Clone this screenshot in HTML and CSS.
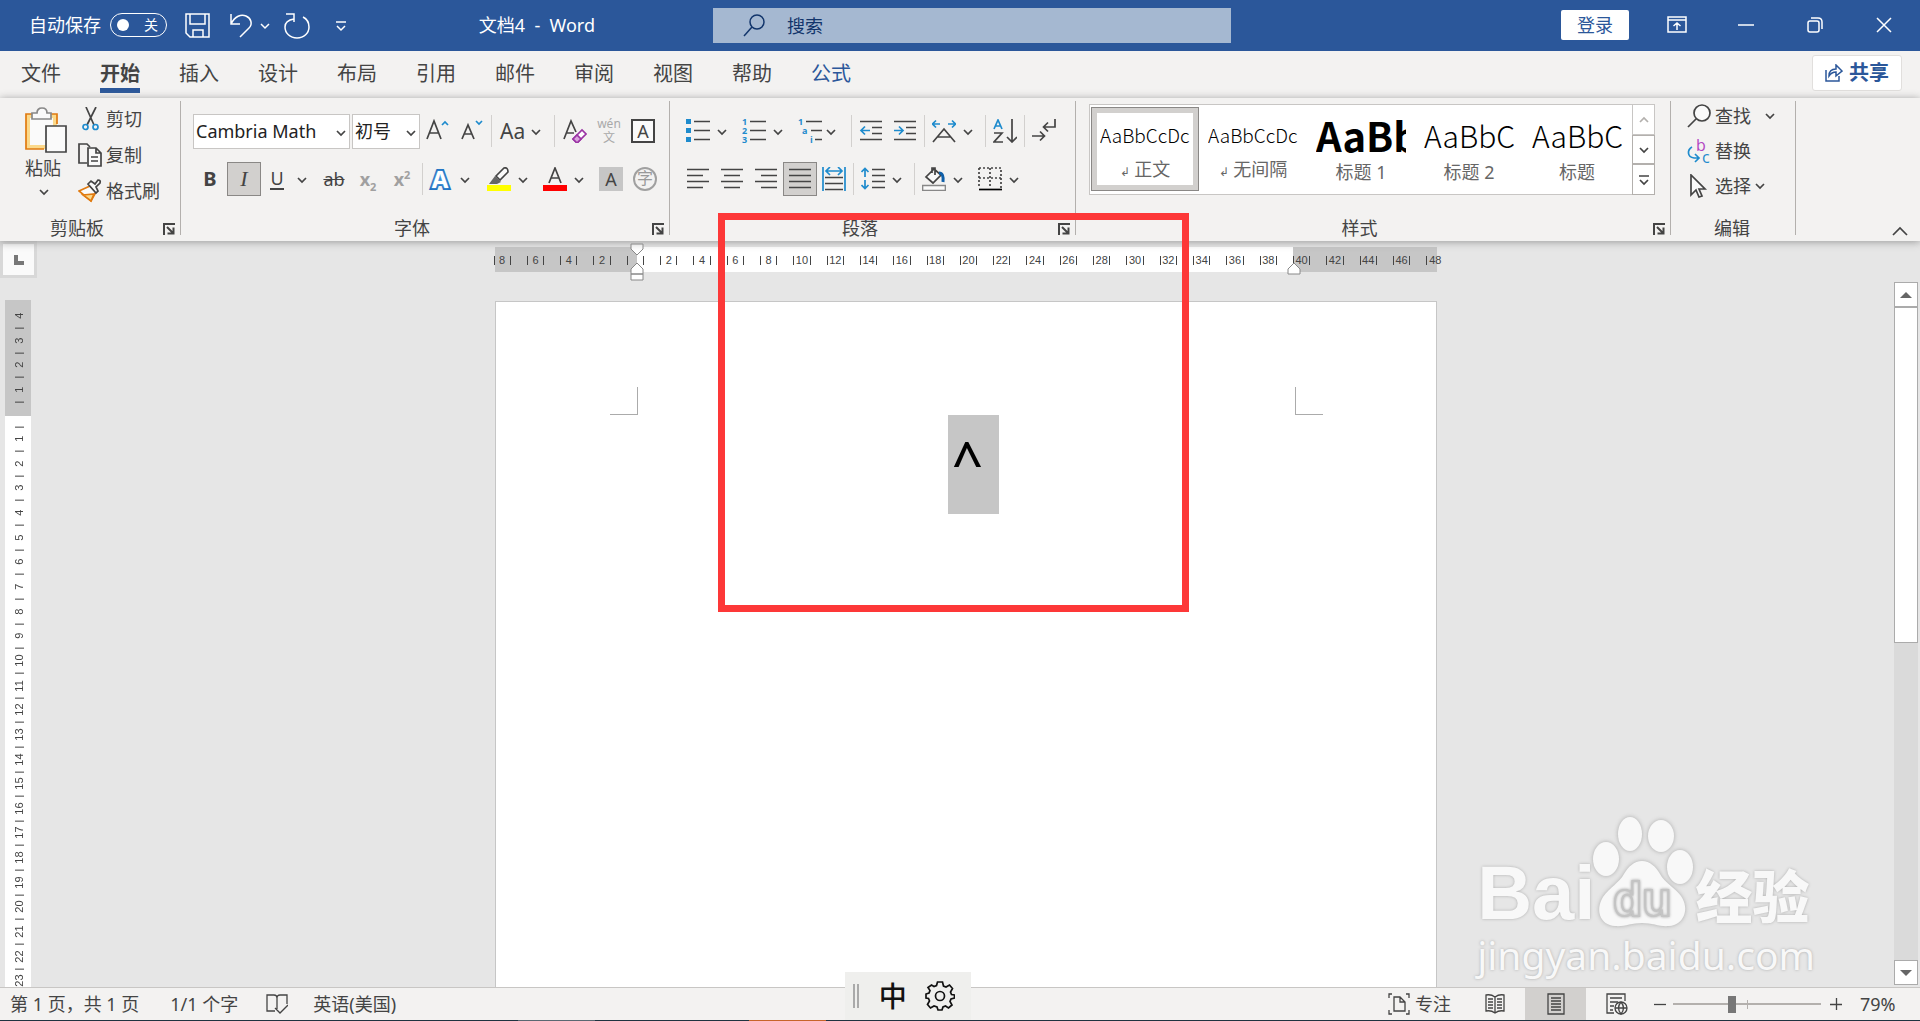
FILE: index.html
```html
<!DOCTYPE html>
<html lang="zh-CN">
<head>
<meta charset="utf-8">
<title>文档4 - Word</title>
<link rel="stylesheet" href="styles.css">
</head>
<body>
<svg class="defs" aria-hidden="true">
  <symbol id="chev" viewBox="0 0 10 10"><path d="M1 3l4 4 4-4"/></symbol>
  <symbol id="launch" viewBox="0 0 12 12"><path d="M1 12V1h11M4 4l6 6M10.500 4.500v6h-6" /></symbol>
</svg>
<div class="app">
  <header class="titlebar">
    <div class="title-left">
      <label class="autosave"><span>自动保存</span><span class="switch"><input type="checkbox"><span>关</span></span></label>
      <button class="qat save" aria-label="保存"><svg width="26" height="26" viewBox="0 0 26 26"><path d="M1 1h23v23H5l-4-4zM5 1v10h15V1M8 24v-7h10v7"/></svg></button>
      <button class="qat undo" aria-label="撤消"><svg width="24" height="26" viewBox="0 0 24 26"><path d="M2 1v10h9M2 11C6 3 12 1 17 3c5 2 7 8 3 12l-9 9"/></svg></button>
      <button class="qat drop" aria-label="撤消选项"><svg width="10" height="10"><use href="#chev"/></svg></button>
      <button class="qat redo" aria-label="重复"><svg width="26" height="26" viewBox="0 0 26 26"><path d="M2 1h8v8M10 1v5C3 7 1 11 1 14c0 6 5 11 12 11s12-5 12-11c0-4-2-8-6-10"/></svg></button>
      <button class="qat" aria-label="自定义快速访问工具栏"><svg width="12" height="12" viewBox="0 0 12 12"><path d="M1 2h10M2 6l4 4 4-4"/></svg></button>
      <h1 class="doc-title">文档4&nbsp; -&nbsp; Word</h1>
    </div>
    <label class="search"><svg width="22" height="24" viewBox="0 0 22 24"><circle cx="14" cy="8" r="7"/><path d="M9 13L1 22"/></svg><input type="text" placeholder="搜索" aria-label="搜索"></label>
    <div class="title-right">
      <button class="login">登录</button>
      <button class="win" aria-label="功能区显示选项"><svg width="20" height="17" viewBox="0 0 20 17"><path d="M1 1h18v15H1zM1 4h18M10 14V7M6.500 10L10 7l3.500 3"/></svg></button>
      <button class="win" aria-label="最小化"><svg width="16" height="16" viewBox="0 0 16 16"><path d="M0 8h16"/></svg></button>
      <button class="win" aria-label="还原"><svg width="16" height="16" viewBox="0 0 16 16"><rect x="1" y="4" width="11" height="11" rx="2"/><path d="M4 1h7q4 0 4 4v7"/></svg></button>
      <button class="win" aria-label="关闭"><svg width="16" height="16" viewBox="0 0 16 16"><path d="M1 1l14 14M15 1L1 15"/></svg></button>
    </div>
  </header>

  <nav class="tabs">
    <a href="#">文件</a><a href="#" class="active">开始</a><a href="#">插入</a><a href="#">设计</a><a href="#">布局</a><a href="#">引用</a><a href="#">邮件</a><a href="#">审阅</a><a href="#">视图</a><a href="#">帮助</a><a href="#" class="context">公式</a>
    <button class="share"><svg width="18" height="18" viewBox="0 0 18 18"><path d="M1 6v11h13v-5M4 12c0-5 3-7 7-7V1l6 6-6 5V8c-3 0-5 1-7 4z"/></svg>共享</button>
  </nav>

  <div class="ribbon">
    <section class="group g-clip">
      <div class="clip-body">
        <button class="paste">
          <svg width="42" height="46" viewBox="0 0 42 46"><path class="fy" d="M1 7h31v35H1z"/><path class="fw" d="M5 11h23v27H5z" stroke="none"/><path class="orange" d="M32 17V7H1v35h18"/><path class="fw gray" d="M7 12V6h5c0-3 2-5 5-5s5 2 5 5h4v6z"/><path class="fw" d="M21 19h20v26H21z"/></svg>
          <span>粘贴</span>
          <svg width="10" height="10"><use href="#chev"/></svg>
        </button>
        <div class="clip-list">
          <button><svg width="24" height="24" viewBox="0 0 24 24"><path d="M8 0l8 18M18 0L9 18"/><circle class="blue" cx="7.500" cy="20" r="2.500"/><circle class="blue" cx="17.500" cy="20" r="2.500"/></svg>剪切</button>
          <button><svg width="24" height="24" viewBox="0 0 24 24"><path d="M9 20H1V1h8l3 3"/><path class="fw" d="M10 5h8l5 5v13H10zM18 5v5h5M13 14h7M13 18h7"/></svg>复制</button>
          <button><svg width="24" height="24" viewBox="0 0 24 24"><path class="fw orange" d="M1 12l11-5 6 6-5 9z"/><path class="fy orange" d="M5 16l11-1-3 7z"/><path class="fw" d="M10 5l3-3 4 3 3-4q3 0 2 3l-4 4 2 4-2 2z"/></svg>格式刷</button>
        </div>
      </div>
      <footer><span>剪贴板</span><button class="launcher" aria-label="剪贴板选项"><svg width="12" height="12"><use href="#launch"/></svg></button></footer>
    </section>

    <section class="group g-font">
      <div class="rows">
        <div class="row">
          <span class="combo name"><select aria-label="字体"><option>Cambria Math</option></select><svg width="10" height="10"><use href="#chev"/></svg></span>
          <span class="combo size"><select aria-label="字号"><option>初号</option></select><svg width="10" height="10"><use href="#chev"/></svg></span>
          <button class="ib" aria-label="增大字号"><svg width="24" height="24" viewBox="0 0 24 24"><path d="M2 20L9 2l7 18M4 14h10"/><path class="blue" d="M17 6l3-3 3 3"/></svg></button>
          <button class="ib" aria-label="减小字号"><svg width="24" height="24" viewBox="0 0 24 24"><path d="M3 20L9 6l6 14M5 15h8"/><path class="blue" d="M17 2l3 3 3-3"/></svg></button>
          <i class="sep"></i>
          <button class="ib split" aria-label="更改大小写"><span class="aa">Aa</span><svg width="10" height="10"><use href="#chev"/></svg></button>
          <i class="sep"></i>
          <button class="ib" aria-label="清除格式"><svg width="24" height="24" viewBox="0 0 24 24"><path d="M1 20L8 2l5 11M4 14h7"/><path class="purple" d="M10 20l9-9 4 4-9 9z"/><path class="purplefill" d="M10 20l4-4 4 4-4 4z"/></svg></button>
          <button class="ib wen" aria-label="拼音指南"><span>wén</span><span>文</span></button>
          <button class="ib" aria-label="字符边框"><span class="boxed">A</span></button>
        </div>
        <div class="row">
          <button class="ib bold">B</button>
          <button class="ib ital on">I</button>
          <button class="ib split" aria-label="下划线"><span class="under">U</span><svg width="10" height="10"><use href="#chev"/></svg></button>
          <button class="ib strike">ab</button>
          <button class="ib dim"><span>x<sub>2</sub></span></button>
          <button class="ib dim"><span>x<sup>2</sup></span></button>
          <i class="sep"></i>
          <button class="ib split" aria-label="文本效果"><span class="effect">A</span><svg width="10" height="10"><use href="#chev"/></svg></button>
          <button class="ib split" aria-label="突出显示"><svg width="24" height="24" viewBox="0 0 24 24"><path class="yellow" d="M0 18h24v6H0z"/><path class="fw" d="M9 9l8-8q4-1 4 4l-8 8z"/><path class="dark" d="M8 9l6 6-4 2H2z"/></svg><svg width="10" height="10"><use href="#chev"/></svg></button>
          <button class="ib split" aria-label="字体颜色"><svg width="24" height="24" viewBox="0 0 24 24"><path class="red" d="M0 18h24v6H0z"/><path d="M6 16l6-15 6 15M8 11h8"/></svg><svg width="10" height="10"><use href="#chev"/></svg></button>
          <button class="ib" aria-label="字符底纹"><span class="shaded">A</span></button>
          <button class="ib" aria-label="带圈字符"><span class="circled">字</span></button>
        </div>
      </div>
      <footer><span>字体</span><button class="launcher" aria-label="字体选项"><svg width="12" height="12"><use href="#launch"/></svg></button></footer>
    </section>

    <section class="group g-para">
      <div class="rows">
        <div class="row">
          <button class="ib split" aria-label="项目符号"><svg width="24" height="24" viewBox="0 0 24 24"><path class="bluefill" d="M0 0h5v5H0zM0 9h5v5H0zM0 18h5v5H0z"/><path d="M8 2.500h16M8 11.500h16M8 20.500h16"/></svg><svg width="10" height="10"><use href="#chev"/></svg></button>
          <button class="ib split" aria-label="编号"><svg width="24" height="24" viewBox="0 0 24 24"><text x="0" y="6">1</text><text x="0" y="15">2</text><text x="0" y="24">3</text><path d="M8 2.500h16M8 11.500h16M8 20.500h16"/></svg><svg width="10" height="10"><use href="#chev"/></svg></button>
          <button class="ib split multi" aria-label="多级列表"><svg width="24" height="24" viewBox="0 0 24 24"><text x="0" y="6">1</text><text x="4" y="15">a</text><text x="12" y="24">i</text><path d="M8 2.500h16M13 11.500h11M17 20.500h7"/></svg><svg width="10" height="10"><use href="#chev"/></svg></button>
          <i class="sep"></i>
          <button class="ib" aria-label="减少缩进"><svg width="24" height="24" viewBox="0 0 24 24"><path d="M1 2.500h22M13 8.500h10M13 14.500h10M1 20.500h22"/><path class="blue" d="M11 11.500H2M6 7.500l-4 4 4 4"/></svg></button>
          <button class="ib" aria-label="增加缩进"><svg width="24" height="24" viewBox="0 0 24 24"><path d="M1 2.500h22M13 8.500h10M13 14.500h10M1 20.500h22"/><path class="blue" d="M1 11.500h9M6 7.500l4 4-4 4"/></svg></button>
          <i class="sep"></i>
          <button class="ib split" aria-label="中文版式"><svg width="24" height="24" viewBox="0 0 24 24"><path d="M1 23L12 10l11 13M5 18h14"/><path class="blue" d="M8 5H1M4 1.500L.5 5 4 8.500M16 5h7M20 1.500L23.500 5 20 8.500"/></svg><svg width="10" height="10"><use href="#chev"/></svg></button>
          <i class="sep"></i>
          <button class="ib" aria-label="排序"><svg width="24" height="24" viewBox="0 0 24 24"><path class="blue" d="M1 10L5 1l4 9M2 7h6"/><path d="M1 14h8L1 23h9M19 0v23M14 18l5 5 5-5"/></svg></button>
          <i class="sep"></i>
          <button class="ib" aria-label="显示编辑标记"><svg width="24" height="24" viewBox="0 0 24 24"><path d="M23 0v8H12M16 3.500L11.500 8l4.500 4.500M0 17h12M8 12.500l4.500 4.500L8 21.500"/></svg></button>
        </div>
        <div class="row">
          <button class="ib" aria-label="左对齐"><svg width="24" height="24" viewBox="0 0 24 24"><path d="M1 2.500h22M1 8.500h16M1 14.500h22M1 20.500h16"/></svg></button>
          <button class="ib" aria-label="居中"><svg width="24" height="24" viewBox="0 0 24 24"><path d="M1 2.500h22M4 8.500h16M1 14.500h22M4 20.500h16"/></svg></button>
          <button class="ib" aria-label="右对齐"><svg width="24" height="24" viewBox="0 0 24 24"><path d="M1 2.500h22M7 8.500h16M1 14.500h22M7 20.500h16"/></svg></button>
          <button class="ib on" aria-label="两端对齐"><svg width="24" height="24" viewBox="0 0 24 24"><path d="M1 2.500h22M1 8.500h22M1 14.500h22M1 20.500h22"/></svg></button>
          <button class="ib" aria-label="分散对齐"><svg width="24" height="24" viewBox="0 0 24 24"><path d="M3 10.500h18M3 16.500h18M3 22.500h18"/><path class="blue" d="M1 0v24M23 0v24M4 4h16M8 0L4 4l4 4M16 0l4 4-4 4"/></svg></button>
          <i class="sep"></i>
          <button class="ib split" aria-label="行距"><svg width="24" height="24" viewBox="0 0 24 24"><path d="M11 2.500h13M11 8.500h13M11 14.500h13M11 20.500h13"/><path class="blue" d="M4 1v9M0.500 5L4 1.500 7.500 5M4 13v9M0.500 18L4 21.500 7.500 18"/></svg><svg width="10" height="10"><use href="#chev"/></svg></button>
          <i class="sep"></i>
          <button class="ib split" aria-label="底纹"><svg width="24" height="24" viewBox="0 0 24 24"><path class="fw gray" d="M.5 18.500h23v5H.5z"/><path class="fw" d="M12 2L4 10l7 6 8-8zM10 6V1h3v7"/><path class="navy" d="M17 6q5 0 4 9" /></svg><svg width="10" height="10"><use href="#chev"/></svg></button>
          <button class="ib split" aria-label="边框"><svg width="24" height="24" viewBox="0 0 24 24"><path class="dots" d="M1 1h22v20M1 1v20M12 1v20M1 11h22"/><path class="black" d="M1 22.500h23"/></svg><svg width="10" height="10"><use href="#chev"/></svg></button>
        </div>
      </div>
      <footer><span>段落</span><button class="launcher" aria-label="段落选项"><svg width="12" height="12"><use href="#launch"/></svg></button></footer>
    </section>

    <section class="group g-style">
      <div class="gallery">
        <button class="style on"><span class="pv">AaBbCcDc</span><span class="nm"><small>↲</small> 正文</span></button>
        <button class="style"><span class="pv">AaBbCcDc</span><span class="nm"><small>↲</small> 无间隔</span></button>
        <button class="style"><span class="pv h1">AaBb</span><span class="nm">标题 1</span></button>
        <button class="style"><span class="pv h2">AaBbC</span><span class="nm">标题 2</span></button>
        <button class="style"><span class="pv h2">AaBbC</span><span class="nm">标题</span></button>
        <div class="spin">
          <button disabled aria-label="上一行"><svg class="flip" width="10" height="10"><use href="#chev"/></svg></button>
          <button aria-label="下一行"><svg width="10" height="10"><use href="#chev"/></svg></button>
          <button aria-label="其他"><svg width="12" height="12" viewBox="0 0 12 12"><path d="M1 2h10M2 6l4 4 4-4"/></svg></button>
        </div>
      </div>
      <footer><span>样式</span><button class="launcher" aria-label="样式选项"><svg width="12" height="12"><use href="#launch"/></svg></button></footer>
    </section>

    <section class="group g-edit">
      <div class="edit-list">
        <button><svg width="24" height="24" viewBox="0 0 24 24"><circle class="fw" cx="15" cy="9" r="8"/><path d="M9 15l-8 8"/></svg>查找<svg class="far" width="10" height="10"><use href="#chev"/></svg></button>
        <button><svg width="24" height="24" viewBox="0 0 24 24"><text class="rp" x="9" y="12">b</text><text class="rb" x="15" y="24">c</text><path class="blue" d="M5 8c-5 3-5 10 2 11h5M8 15l4 4-4 4"/></svg>替换</button>
        <button><svg width="24" height="24" viewBox="0 0 24 24"><path class="fw" d="M4 1v20l5-5 3 7 3-1-3-7h6z"/></svg>选择<svg width="10" height="10"><use href="#chev"/></svg></button>
      </div>
      <footer><span>编辑</span></footer>
    </section>
    <button class="collapse" aria-label="折叠功能区"><svg width="16" height="10" viewBox="0 0 16 10"><path d="M1 9l7-7 7 7"/></svg></button>
  </div>

  <main class="workspace">
    <div class="side">
      <button class="tabsel" aria-label="制表符"><svg width="10" height="10" viewBox="0 0 10 10"><path d="M2 0v8h8"/></svg></button>
      <div class="vruler"><div class="vmargin"></div><div class="vcells">
        <span>4</span><span>3</span><span>2</span><span>1</span><span></span><span>1</span><span>2</span><span>3</span><span>4</span><span>5</span><span>6</span><span>7</span><span>8</span><span>9</span><span>10</span><span>11</span><span>12</span><span>13</span><span>14</span><span>15</span><span>16</span><span>17</span><span>18</span><span>19</span><span>20</span><span>21</span><span>22</span><span>23</span>
      </div></div>
    </div>
    <div class="canvas">
      <div class="hruler">
        <div class="hcells"><span>8</span><span>6</span><span>4</span><span>2</span><span></span><span>2</span><span>4</span><span>6</span><span>8</span><span>10</span><span>12</span><span>14</span><span>16</span><span>18</span><span>20</span><span>22</span><span>24</span><span>26</span><span>28</span><span>30</span><span>32</span><span>34</span><span>36</span><span>38</span><span>40</span><span>42</span><span>44</span><span>46</span><span>48</span></div>
        <svg class="marker first" width="14" height="38" viewBox="0 0 14 38"><path d="M1 1h12v5l-6 6-6-6zM1 31v-5l6-6 6 6v5zM1 31h12v6H1z"/></svg>
        <svg class="marker right" width="14" height="13" viewBox="0 0 14 13"><path d="M1 12V7l6-6 6 6v5z"/></svg>
      </div>
      <article class="page">
        <div class="marks"><i class="crop l"></i><i class="crop r"></i></div>
        <p class="text"><span class="sel">^</span></p>
      </article>
    </div>
    <div class="vscroll">
      <button aria-label="向上滚动"><svg width="12" height="6" viewBox="0 0 12 6"><path d="M6 0l6 6H0z"/></svg></button>
      <div class="track"><div class="thumb"></div></div>
      <button aria-label="向下滚动"><svg width="12" height="6" viewBox="0 0 12 6"><path d="M0 0h12L6 6z"/></svg></button>
    </div>
    <div class="watermark" aria-hidden="true">
      <div class="wm-top"><span class="wm-bai">Bai</span>
        <svg width="96" height="112" viewBox="0 0 96 112"><ellipse cx="14" cy="44" rx="13" ry="17"/><ellipse cx="38" cy="19" rx="12" ry="17"/><ellipse cx="69" cy="21" rx="13" ry="16"/><ellipse cx="88" cy="52" rx="13" ry="17"/><path d="M50 46c8 0 14 6 18 13 5 9 14 13 21 22 9 13 3 29-12 30-9 1-16-3-27-3s-18 4-27 3C8 110 3 95 11 82c7-10 16-14 21-23 4-7 10-13 18-13z"/><text x="21" y="101">du</text></svg>
        <span class="wm-cn">经验</span></div>
      <div class="wm-url">jingyan.baidu.com</div>
    </div>
  </main>

  <footer class="status">
    <span>第 1 页，共 1 页</span><span class="words">1/1 个字</span>
    <button class="proof" aria-label="校对"><svg width="22" height="20" viewBox="0 0 22 20"><path d="M9 17H1V1h7q3 0 3 3 0-3 3-3h7v9M11 4v11M9 14l5 5 8-8"/></svg></button>
    <span>英语(美国)</span>
    <button class="focus"><svg width="22" height="22" viewBox="0 0 22 22"><path d="M4 1H1v4M18 1h3v4M4 21H1v-4M18 21h3v-4M6 4h6l5 5v9H6zM12 4v5h5"/></svg>专注</button>
    <button class="view" aria-label="阅读视图"><svg width="20" height="20" viewBox="0 0 20 20"><path d="M10 3Q6 0 1 1v16q5-1 9 2 4-3 9-2V1q-5-1-9 2v16M3 5h5M3 8h5M3 11h5M3 14h5M12 5h5M12 8h5M12 11h5M12 14h5"/></svg></button>
    <button class="view on" aria-label="页面视图"><svg width="20" height="22" viewBox="0 0 20 22"><path d="M2 1h16v20H2zM5 5h10M5 8h10M5 11h10M5 14h10M5 17h10"/></svg></button>
    <button class="view" aria-label="Web 版式视图"><svg width="22" height="22" viewBox="0 0 22 22"><path d="M8 20H1V1h18v7M4 5h12M4 9h8M4 13h4M4 17h3"/><circle cx="15" cy="15" r="6"/><path d="M9 15h12M15 9q-5 6 0 12q5-6 0-12"/></svg></button>
    <button class="zb out" aria-label="缩小"><svg width="12" height="12" viewBox="0 0 12 12"><path d="M0 6.500h12"/></svg></button>
    <input class="zoom" type="range" min="0" max="100" value="39" aria-label="显示比例">
    <button class="zb" aria-label="放大"><svg width="12" height="12" viewBox="0 0 12 12"><path d="M0 6.500h12M6.500 0v12"/></svg></button>
    <span class="pct">79%</span>
  </footer>
  <div class="taskline"></div>
  <div class="ime"><i></i><button class="cn">中</button><button aria-label="设置"><svg width="30" height="30" viewBox="0 0 30 30"><path d="M12.500 1h5l1 4 2.500 1 3.500-2 3 3.500L25.500 11l1 2.500 3 .5v3l-3.500 1-1 2.500 2 3.500-3.500 3-3-2-2.500 1-1 3h-4l-1-3-3-1-3.500 2-3-3.500L4.500 20l-1-2.500L1 17v-4l3-1 1-2.500L3 6.500 6.500 4 9 5.500l2.500-1z"/><circle cx="15" cy="15" r="4.500"/></svg></button></div>
  <div class="highlight-box"></div>
</div>
</body>
</html>
```

FILE: styles.css
```css
* { box-sizing: border-box; }

body {
  margin: 0;
  color: #444;
  font: 18px/24px "Noto Sans", "Noto Sans CJK SC", sans-serif;
}

button, input, select {
  font: inherit;
  color: inherit;
}

button {
  display: flex;
  align-items: center;
  justify-content: center;
  padding: 0;
  border: 0;
  background: none;
  white-space: nowrap;
}

svg {
  display: block;
  flex: none;
  fill: none;
  stroke: #444;
  stroke-width: 1.7;
}

i { display: block; }
.defs { position: absolute; width: 0; height: 0; }

.app {
  position: relative;
  display: flex;
  flex-direction: column;
  height: 100vh;
  overflow: hidden;
  background: #e6e6e6;
}

/* Title bar */
.titlebar {
  display: grid;
  grid-template-columns: 713fr 518fr 689fr;
  align-items: center;
  flex: none;
  height: 51px;
  background: #2b579a;
  color: #fff;
}
.titlebar svg { stroke: #fff; stroke-width: 1.5; }
.title-left, .title-right { display: flex; align-items: center; }
.title-left { padding: 0 0 2px 29px; }
.autosave, .switch { display: flex; align-items: center; }
.autosave { gap: 9px; }
.switch {
  justify-content: space-between;
  width: 57px;
  height: 24px;
  padding: 0 8px 0 6px;
  border: 1px solid #fff;
  border-radius: 12px;
  font-size: 14px;
}
.switch input {
  appearance: none;
  width: 12px;
  height: 12px;
  margin: 0;
  border-radius: 50%;
  background: #fff;
}
.qat { padding-top: 2px; }
.save { margin-left: 18px; }
.undo { margin-left: 18px; }
.drop { margin-left: 7px; }
.redo { margin: 0 25px 0 14px; }
.doc-title {
  margin: 0 118px 0 auto;
  font-size: 18px;
  font-weight: 400;
  white-space: nowrap;
}
.search {
  display: flex;
  align-items: center;
  gap: 22px;
  height: 35px;
  padding-left: 30px;
  background: #a5b8d1;
}
.titlebar .search svg { stroke: #12356b; }
.search input {
  flex: 1;
  min-width: 0;
  padding: 0;
  border: 0;
  outline: 0;
  background: none;
}
.search input::placeholder { color: #12356b; opacity: 1; }
.title-right { justify-content: flex-end; padding: 0 2px 2px 0; }
.login {
  width: 68px;
  height: 30px;
  margin-right: 13px;
  border-radius: 2px;
  background: #fff;
  color: #2b579a;
}
.win { width: 69px; height: 48px; }

/* Tabs */
.tabs {
  display: flex;
  gap: 39px;
  flex: none;
  height: 47px;
  padding: 4px 18px 0 21px;
  background: #f3f2f1;
  font-size: 20px;
}
.tabs a {
  height: 38px;
  color: #444;
  line-height: 38px;
  text-decoration: none;
}
.tabs .active { border-bottom: 5px solid #2b579a; font-weight: 700; }
.tabs .context { color: #2b579a; }
.share {
  gap: 6px;
  width: 90px;
  height: 36px;
  margin-left: auto;
  border: 1px solid #e1dfdd;
  border-radius: 3px;
  background: #fff;
  color: #2b579a;
  font-weight: 700;
}
.share svg { stroke: #2b579a; stroke-width: 1.5; }

/* Ribbon */
.ribbon {
  position: relative;
  z-index: 1;
  display: flex;
  flex: none;
  height: 143px;
  padding: 3px 0 6px;
  background: #f3f2f1;
  box-shadow: 0 1px 8px #999;
}
.group {
  display: flex;
  flex-direction: column;
  justify-content: space-between;
  flex: none;
  border-right: 1px solid #b3b0ad;
}
.group footer {
  display: flex;
  justify-content: center;
  position: relative;
  line-height: 14px;
}
.launcher { position: absolute; right: 5px; bottom: 0; }
.launcher svg { stroke-width: 2; }
.g-clip { width: 181px; }
.g-clip footer { padding-right: 26px; }
.g-font { width: 489px; padding-left: 12px; }
.g-font footer { padding-right: 38px; }
.g-para { width: 406px; padding-left: 11px; }
.g-para footer { padding-right: 36px; }
.g-style { width: 595px; padding-left: 13px; }
.g-style footer { padding-right: 40px; }
.g-edit { width: 125px; padding-left: 16px; }
.g-edit footer { padding-right: 18px; }

.fw { fill: #fafafa; }
.fy { fill: #fbd98b; stroke: none; }
.orange { stroke: #e07a10; }
.fy.orange { stroke: #e07a10; }
.gray { stroke: #888; }
.black { stroke: #000; }
.blue { stroke: #1e8bcd; }
.bluefill { fill: #1e8bcd; stroke: none; }
.navy { stroke: #0f5fa8; stroke-width: 3; }
.purple { stroke: #9b35a5; fill: #fff; }
.purplefill { stroke: #9b35a5; fill: #d9a3de; }
.dark { fill: #666; stroke: none; }
.yellow { fill: #ff0; stroke: none; }
.red { fill: #f00; stroke: none; }
.dots { stroke-dasharray: 2 2; }
svg text {
  fill: #1e8bcd;
  stroke: none;
  font: 700 9px "Open Sans", sans-serif;
}
svg .rp { fill: #b146c2; font: 16px "Open Sans", sans-serif; }
svg .rb { fill: #1e8bcd; font: 16px "Open Sans", sans-serif; }

.clip-body { display: flex; gap: 11px; padding: 6px 0 0 25px; }
.paste { flex-direction: column; justify-content: flex-start; width: 42px; gap: 3px; }
.paste span { margin-left: -6px; }
.paste > svg:last-child { margin: 4px 4px 0 0; }
.clip-list { display: flex; flex-direction: column; gap: 12px; }
.clip-list button, .edit-list button { justify-content: flex-start; gap: 4px; }

.rows { display: flex; flex-direction: column; gap: 14px; padding-top: 13px; }
.row { display: flex; align-items: center; height: 34px; }
.combo {
  position: relative;
  flex: none;
  height: 35px;
  border: 1px solid #c8c6c4;
  background: #fff;
  color: #222;
}
.combo.name { width: 157px; margin-right: 2px; }
.combo.size { width: 68px; }
.combo select {
  appearance: none;
  width: 100%;
  height: 33px;
  padding: 0 0 0 2px;
  border: 0;
  background: none;
}
.combo svg { position: absolute; right: 3px; top: 13px; pointer-events: none; }
.ib {
  flex: none;
  width: 34px;
  height: 34px;
  border: 1px solid transparent;
}
.on.ib { border-color: #8a8886; background: #d2d0ce; }
.split { justify-content: flex-start; gap: 7px; width: 56px; padding-left: 4px; }
.split.multi { gap: 4px; }
.split > svg:last-child { margin-top: 2px; }
.split > span { width: 24px; text-align: center; }
.sep { flex: none; width: 1px; height: 32px; margin: 0 2px; background: #d2d0ce; }
.g-font .sep { margin: 0 3px; }
.aa { font-size: 21px; }
.wen { flex-direction: column; color: #a9a9a9; font-size: 12px; line-height: 14px; }
.boxed, .shaded, .circled { width: 24px; height: 24px; line-height: 21px; }
.boxed { border: 2px solid #444; background: #fafafa; }
.shaded { background: #c6c6c6; line-height: 24px; }
.circled { border: 2px solid #a0a0a0; border-radius: 50%; color: #999; font-size: 16px; line-height: 19px; }
.bold { font-size: 20px; font-weight: 700; }
.ital { font: italic 22px "Liberation Serif", serif; }
.split .under { width: 14px; margin: 0 6px 0 4px; border-bottom: 2px solid #444; line-height: 20px; }
.strike { text-decoration: line-through; }
.dim { color: #a0a0a0; font-weight: 700; }
.dim sub, .dim sup { font-size: 11px; line-height: 11px; }
.split .effect {
  margin-left: -3px;
  margin-right: 1px;
  color: #fff;
  font-size: 24px;
  font-weight: 700;
  paint-order: stroke fill;
  -webkit-text-stroke: 4px #1e6fbf;
  text-shadow: 0 0 3px #6fb7ee;
}

/* Style gallery */
.gallery {
  display: flex;
  width: 566px;
  height: 91px;
  margin-top: 3px;
  border: 1px solid #c8c6c4;
  background: #fff;
}
.style {
  flex-direction: column;
  flex: none;
  justify-content: flex-start;
  width: 108px;
  height: 84px;
  margin: 2px 0 0;
  padding: 1px 3px;
  border: 6px solid transparent;
  color: #666;
}
.style:first-child { margin-left: 1px; }
.style.on { border: 1px solid #8a8886; padding: 6px 8px; box-shadow: inset 0 0 0 5px #d2d0ce; }
.pv {
  width: 90px;
  height: 48px;
  overflow: hidden;
  color: #000;
  font: 300 19px/42px "Noto Sans CJK SC", sans-serif;
  text-align: left;
}
.pv.h1 { font-size: 40px; font-weight: 700; }
.pv.h2 { font-size: 30px; }
.nm small { font-size: 12px; }
.spin {
  display: grid;
  grid-template-rows: 31px 29px 31px;
  width: 23px;
  margin: -1px -1px 0 auto;
}
.spin button { border: 1px solid #b3b0ad; }
.spin button:disabled { border-color: #c8c6c4; }
.spin button:disabled svg { stroke: #b3b0ad; }
.flip { transform: rotate(180deg); }

.edit-list { display: flex; flex-direction: column; gap: 11px; padding-top: 3px; }
.edit-list .far { margin-left: 10px; }
.collapse { position: absolute; right: 12px; bottom: 5px; }

/* Work area */
.workspace { position: relative; display: flex; flex: 1; min-height: 0; }
.side { display: flex; flex-direction: column; flex: none; width: 37px; }
.tabsel {
  flex: none;
  width: 37px;
  height: 37px;
  border: 3px solid #d8d8d8;
  background: #fafafa;
}
.tabsel svg { stroke: #777; stroke-width: 4; }
.vruler {
  position: relative;
  flex: 1;
  width: 26px;
  margin: 22px 0 0 5px;
  overflow: hidden;
  background: #fff;
}
.vmargin { height: 116px; background: #c6c6c6; }
.vcells {
  position: absolute;
  top: 4px;
  left: 10px;
  display: grid;
  grid-auto-rows: 1fr;
  width: 9px;
  height: 690px;
}
.vcells span {
  border-top: 1px solid #444;
  font: 11px/9px "Liberation Sans", sans-serif;
  text-align: center;
  writing-mode: vertical-rl;
  transform: rotate(180deg);
}
.canvas {
  display: flex;
  flex: 1;
  flex-direction: column;
  align-items: center;
  min-width: 0;
}
.hruler {
  position: relative;
  flex: none;
  width: 942px;
  height: 25px;
  margin: 6px 0 29px;
  background: linear-gradient(90deg, #c6c6c6 142px, #fff 142px 798px, #c6c6c6 798px);
}
.hcells {
  display: grid;
  grid-auto-columns: 1fr;
  grid-auto-flow: column;
  align-items: center;
  width: 966px;
  height: 27px;
  margin-left: -9px;
}
.hcells span {
  height: 9px;
  margin: 0 8px;
  border: solid #444;
  border-width: 0 1px;
  font: 11px/9px "Liberation Sans", sans-serif;
  text-align: center;
}
.hcells span:last-child { border-right: 0; }
.marker { position: absolute; fill: #fff; stroke: #888; stroke-width: 1; }
.marker.first { left: 135px; top: -4px; }
.marker.right { left: 792px; top: 15px; }
.page {
  flex: 1;
  width: 942px;
  padding: 85px 113px 0 114px;
  border: 1px solid #c6c6c6;
  border-bottom: 0;
  background: #fff;
}
.marks { display: flex; justify-content: space-between; }
.crop { width: 28px; height: 28px; border: solid #ababab; border-width: 0 0 1px; }
.crop.l { border-right-width: 1px; }
.crop.r { border-left-width: 1px; }
.text { margin: 0; padding-left: 15px; color: #000; text-align: center; }
.sel {
  display: inline-block;
  width: 51px;
  height: 99px;
  padding-left: 4px;
  background: #c6c6c6;
  font-size: 54px;
  font-weight: 500;
  line-height: 90px;
  text-align: left;
}
.vscroll {
  display: flex;
  flex-direction: column;
  flex: none;
  width: 24px;
  margin: 41px 2px 2px 0;
  background: #dadada;
}
.vscroll button { flex: none; height: 25px; border: 1px solid #ababab; background: #fff; }
.vscroll svg { fill: #666; stroke: none; }
.track { flex: 1; }
.thumb { height: 51.5%; border: 1px solid #ababab; background: #fff; }

/* Watermark over the work area */
.watermark {
  position: absolute;
  right: 105px;
  bottom: 4px;
  color: #f8f8f8;
  text-shadow: 0 0 3px #aaa;
  white-space: nowrap;
}
.wm-top { display: flex; align-items: flex-end; height: 112px; }
.wm-top svg {
  overflow: visible;
  margin: 0 8px 0 -4px;
  fill: #f8f8f8;
  stroke: none;
  filter: drop-shadow(0 0 2px #aaa);
}
.wm-top text { fill: #f8f8f8; stroke: #c4c4c4; stroke-width: 2; font: 700 48px "Liberation Sans", sans-serif; }
.wm-bai { font: 700 76px/68px "Liberation Sans", sans-serif; }
.wm-cn { font: 900 57px/68px "Noto Sans CJK SC", sans-serif; }
.wm-url { font: 39px/56px "Noto Sans", sans-serif; }

/* Status bar */
.status {
  display: flex;
  align-items: center;
  flex: none;
  height: 33px;
  padding: 0 23px 0 10px;
  border-top: 1px solid #c8c6c4;
  background: #f3f2f1;
  white-space: nowrap;
}
.words { margin-left: 31px; }
.proof { margin: 0 25px 0 28px; }
.status svg { stroke-width: 1.3; }
.focus { gap: 5px; margin: 0 13px 0 auto; }
.view { width: 61px; height: 32px; }
.view.on { background: #d2d0ce; }
.zb { width: 30px; height: 32px; }
.zb.out { width: 26px; }
.zoom {
  appearance: none;
  width: 148px;
  height: 17px;
  margin: 0;
  background:
    linear-gradient(#b3b0ad, #b3b0ad) center / 1px 9px no-repeat,
    linear-gradient(#b3b0ad, #b3b0ad) center / 100% 2px no-repeat;
}
.zoom::-webkit-slider-thumb {
  appearance: none;
  width: 8px;
  height: 17px;
  background: #777;
}
.pct { width: 37px; margin-left: 9px; }
.taskline {
  flex: none;
  height: 1px;
  background: linear-gradient(90deg, #1f3340 27%, #5a6872 27% 31%, #1f3340 31% 39%, #c8642a 39% 43%, #1f3340 43%);
}
.ime {
  position: absolute;
  left: 44%;
  bottom: 1px;
  display: flex;
  align-items: center;
  gap: 18px;
  width: 126px;
  height: 48px;
  padding-left: 8px;
  background: #efefed;
  color: #111;
}
.ime i { width: 6px; height: 24px; border: solid #aaa; border-width: 0 2px; }
.ime .cn { margin-left: 2px; font-size: 28px; font-weight: 500; }
.ime svg { stroke: #111; }

/* Red call-out frame */
.highlight-box {
  position: absolute;
  z-index: 2;
  left: 718px;
  top: 213px;
  width: 471px;
  height: 399px;
  border: 7px solid #fd3838;
  pointer-events: none;
}
```
